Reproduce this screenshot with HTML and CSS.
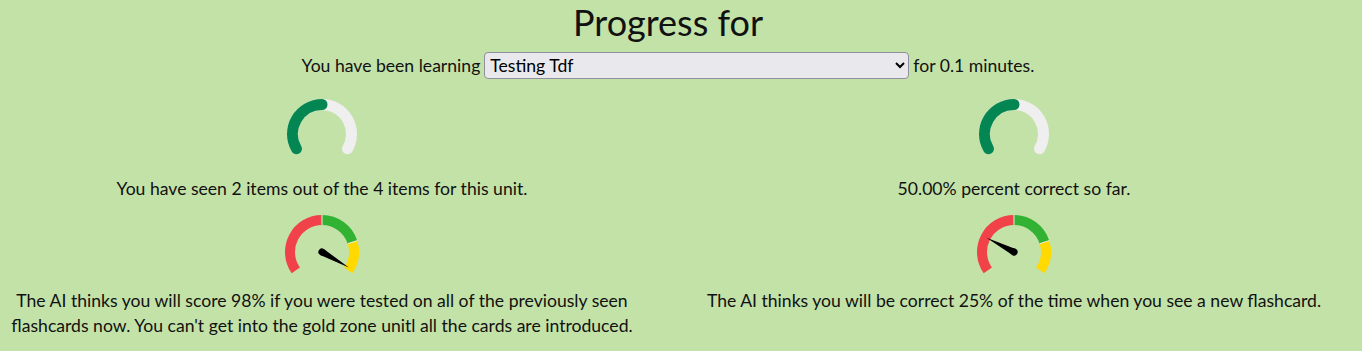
FILE: index.html
```html
<!DOCTYPE html>
<html lang="en">
<head>
<meta charset="utf-8">
<title>Progress</title>
<link rel="stylesheet" href="styles.css">
</head>
<body>
<div class="page">
  <h1 class="title">Progress for </h1>
  <div class="learning">
    <span>You have been learning</span>
    <select class="tdf-select">
      <option>Testing Tdf</option>
    </select>
    <span>for 0.1 minutes.</span>
  </div>
  <div class="grid">
    <div class="cell">
      <svg class="ring" width="76" height="56" viewBox="0 0 76 56">
        <path d="M12.45 49.75 A29.5 29.5 0 1 1 63.55 49.75" fill="none" stroke="#efefef" stroke-width="11" stroke-linecap="round"/>
        <path d="M12.45 49.75 A29.5 29.5 0 0 1 38 5.5" fill="none" stroke="#038652" stroke-width="11" stroke-linecap="round"/>
      </svg>
      <p class="caption one">You have seen 2 items out of the 4 items for this unit.</p>
    </div>
    <div class="cell">
      <svg class="ring" width="76" height="56" viewBox="0 0 76 56">
        <path d="M12.45 49.75 A29.5 29.5 0 1 1 63.55 49.75" fill="none" stroke="#efefef" stroke-width="11" stroke-linecap="round"/>
        <path d="M12.45 49.75 A29.5 29.5 0 0 1 38 5.5" fill="none" stroke="#038652" stroke-width="11" stroke-linecap="round"/>
      </svg>
      <p class="caption one">50.00% percent correct so far.</p>
    </div>
    <div class="cell">
      <svg class="speedo" width="76" height="59" viewBox="0 0 76 59">
        <path d="M11.79 55.35 A32 32 0 0 1 38 5" fill="none" stroke="#f04248" stroke-width="10"/>
        <path d="M38 5 A32 32 0 0 1 68.43 27.11" fill="none" stroke="#32b232" stroke-width="10"/>
        <path d="M68.43 27.11 A32 32 0 0 1 64.21 55.35" fill="none" stroke="#ffd900" stroke-width="10"/>
        <line x1="38" y1="0" x2="38" y2="10" stroke="#e6eede" stroke-width="1"/>
        <line x1="73.2" y1="25.6" x2="63.7" y2="28.7" stroke="#e6eede" stroke-width="1"/>
        <g transform="rotate(120 38 37)">
          <polygon points="34.5,37 41.5,37 38,6" fill="#000"/>
          <circle cx="38" cy="37" r="3.6" fill="#000"/>
        </g>
      </svg>
      <p class="caption two">The AI thinks you will score 98% if you were tested on all of the previously seen flashcards now. You can't get into the gold zone unitl all the cards are introduced.</p>
    </div>
    <div class="cell">
      <svg class="speedo" width="76" height="59" viewBox="0 0 76 59">
        <path d="M11.79 55.35 A32 32 0 0 1 38 5" fill="none" stroke="#f04248" stroke-width="10"/>
        <path d="M38 5 A32 32 0 0 1 68.43 27.11" fill="none" stroke="#32b232" stroke-width="10"/>
        <path d="M68.43 27.11 A32 32 0 0 1 64.21 55.35" fill="none" stroke="#ffd900" stroke-width="10"/>
        <line x1="38" y1="0" x2="38" y2="10" stroke="#e6eede" stroke-width="1"/>
        <line x1="73.2" y1="25.6" x2="63.7" y2="28.7" stroke="#e6eede" stroke-width="1"/>
        <g transform="rotate(-62.5 38 37)">
          <polygon points="34.5,37 41.5,37 38,6" fill="#000"/>
          <circle cx="38" cy="37" r="3.6" fill="#000"/>
        </g>
      </svg>
      <p class="caption two">The AI thinks you will be correct 25% of the time when you see a new flashcard.</p>
    </div>
  </div>
</div>
</body>
</html>
```

FILE: styles.css
```css
html, body {
  margin: 0;
  padding: 0;
  background: #c3e2a8;
}
body {
  font-family: Lato, "Noto Sans", sans-serif;
  color: #111;
  font-size: 17.6px;
  min-height: 351px;
}
.page {
  display: flex;
  flex-direction: column;
  align-items: stretch;
  padding-right: 26px;
}
.title {
  margin: 0;
  text-align: center;
  font-size: 36px;
  font-weight: 400;
  line-height: 43px;
  padding-top: 1px;
}
.learning {
  margin-top: 8px;
  display: flex;
  justify-content: center;
  align-items: center;
  gap: 4px;
  height: 27px;
}
.tdf-select {
  width: 425px;
  height: 27px;
  font-family: Lato, "Noto Sans", sans-serif;
  font-size: 17.6px;
  color: #000;
  background: #e9e9ed;
  border: 1px solid #8f8f9d;
  border-radius: 4px;
  padding: 0 0 0 1px;
}
.grid {
  display: grid;
  grid-template-columns: 644px 644px;
  column-gap: 48px;
  row-gap: 14px;
  margin-top: 20px;
}
.cell {
  display: flex;
  flex-direction: column;
  align-items: center;
}
.ring, .speedo {
  display: block;
}
.caption {
  margin: 0;
  text-align: center;
  line-height: 25px;
}
.caption.one {
  margin-top: 21px;
}
.caption.two {
  margin-top: 14px;
}
```
